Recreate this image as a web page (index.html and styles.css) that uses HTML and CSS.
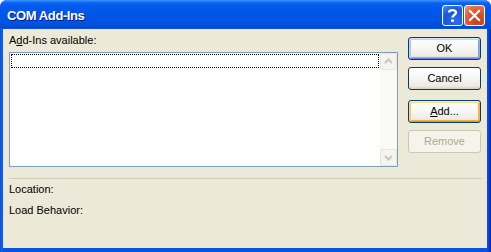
FILE: index.html
```html
<!DOCTYPE html>
<html>
<head>
<meta charset="utf-8">
<link rel="stylesheet" href="styles.css">
</head>
<body>
<div class="window">
  <div class="titlebar">
    <span class="title">COM Add-Ins</span>
    <div class="tbtns">
      <span class="tb help"><svg width="21" height="21" viewBox="0 0 21 21"><path d="M7 7.5 C7 4.5 14 4.2 14 7.6 C14 9.8 10.5 10 10.5 12.6" fill="none" stroke="#fff" stroke-width="2.4"/><rect x="9.2" y="14.4" width="2.6" height="2.6" fill="#fff"/></svg></span>
      <span class="tb close"><svg width="21" height="21" viewBox="0 0 21 21"><path d="M6 6 L15 15 M15 6 L6 15" stroke="#fff" stroke-width="2.2" stroke-linecap="square"/></svg></span>
    </div>
  </div>
  <div class="client">
    <div class="main">
      <div class="left">
        <div class="label">A<u>d</u>d-Ins available:</div>
        <div class="list">
          <div class="items"><div class="focus"></div></div>
          <div class="vscroll">
            <div class="sbtn"><svg width="15" height="15" viewBox="0 0 15 15"><path d="M4 9 L7.5 5.5 L11 9" fill="none" stroke="#C9C7BA" stroke-width="2"/></svg></div>
            <div class="track"></div>
            <div class="sbtn"><svg width="15" height="15" viewBox="0 0 15 15"><path d="M4 6 L7.5 9.5 L11 6" fill="none" stroke="#C9C7BA" stroke-width="2"/></svg></div>
          </div>
        </div>
      </div>
      <div class="buttons">
        <div class="btn default"><span>OK</span></div>
        <div class="btn"><span>Cancel</span></div>
        <div class="btn hot gap"><span><u>A</u>dd...</span></div>
        <div class="btn disabled"><span>Remove</span></div>
      </div>
    </div>
    <div class="sep"></div>
    <div class="info">
      <div class="row">Location:</div>
      <div class="row">Load Behavior:</div>
    </div>
  </div>
</div>
</body>
</html>
```

FILE: styles.css
```css
html, body {
  margin: 0;
  padding: 0;
  background: #ffffff;
}
.window {
  width: 491px;
  height: 252px;
  box-sizing: border-box;
  display: flex;
  flex-direction: column;
  background: linear-gradient(to right, #0831D9 0px, #166AEE 1px, #0855DD 3px, #0855DD 487px, #0831D9 490px, #001EA0 491px);
  border-radius: 7px 7px 0 0;
  overflow: hidden;
  font-family: "Liberation Sans", Arial, sans-serif;
  font-size: 11px;
  color: #000;
}
.titlebar {
  height: 29px;
  flex: none;
  display: flex;
  align-items: center;
  justify-content: space-between;
  padding: 0 6px 0 7px;
  background: linear-gradient(to bottom, #3D95FF 0px, #0A62F0 3px, #0058EE 8px, #0055E5 16px, #0054E3 22px, #004ED9 26px, #0049CF 28px, #1860E3 29px);
}
.title {
  color: #fff;
  font-weight: bold;
  font-size: 13px;
  letter-spacing: -0.4px;
  text-shadow: 1px 1px 0 #0A1883;
  padding-top: 1px;
}
.tbtns {
  display: flex;
  gap: 1px;
  padding-top: 2px;
}
.tb {
  width: 21px;
  height: 21px;
  box-sizing: border-box;
  border: 1px solid #fff;
  border-radius: 3px;
  display: flex;
  align-items: center;
  justify-content: center;
  overflow: hidden;
}
.tb svg { flex: none; }
.help {
  background: radial-gradient(circle at 70% 80%, #2E6CEC 0%, #1F5BE0 40%, #1C57DE 60%, #5C8FF0 100%);
}
.close {
  background: radial-gradient(circle at 70% 80%, #C7401C 0%, #D9532D 45%, #E5704E 75%, #F3A38A 100%);
}
.client {
  flex: 1;
  margin: 0 4px 4px 3px;
  background: #ECE9D8;
  display: flex;
  flex-direction: column;
  padding: 5px 6px 0 6px;
}
.main {
  display: flex;
  gap: 10px;
}
.left {
  width: 389px;
  display: flex;
  flex-direction: column;
}
.label {
  line-height: 13px;
  height: 13px;
}
.list {
  margin-top: 5px;
  height: 115px;
  box-sizing: border-box;
  border: 1px solid #7F9DB9;
  background: #fff;
  display: flex;
}
.items {
  flex: 1;
  padding: 1px;
}
.focus {
  height: 14px;
  box-sizing: border-box;
  border: 1px dotted #000;
}
.vscroll {
  width: 17px;
  display: flex;
  flex-direction: column;
  background: #FBFAF7;
}
.sbtn {
  width: 17px;
  height: 17px;
  box-sizing: border-box;
  border: 1px solid #E8E6DC;
  border-radius: 2px;
  background: #F5F4EE;
  display: flex;
  align-items: center;
  justify-content: center;
}
.track { flex: 1; }
.buttons {
  width: 73px;
  padding-top: 3px;
  display: flex;
  flex-direction: column;
  gap: 7px;
}
.btn {
  height: 23px;
  box-sizing: border-box;
  border: 1px solid #003C74;
  border-radius: 3px;
  background: linear-gradient(to bottom, #FFFFFF 0%, #F6F6F3 50%, #ECEBE6 85%, #D6D0C5 100%);
  display: flex;
  align-items: center;
  justify-content: center;
}
.btn span { line-height: 13px; }
.btn.default {
  box-shadow: inset 0 1px 0 #CEE7FF, inset 1px 0 0 #BCD4F6, inset -1px 0 0 #89ADE4, inset 0 -1px 0 #6982EE, inset 0 2px 0 #BCD4F6, inset 2px 0 0 #A9C6F4, inset -2px 0 0 #7DA2E6, inset 0 -2px 0 #89ADE4;
}
.btn.hot {
  box-shadow: inset 0 1px 0 #FFF0CF, inset 1px 0 0 #FDD889, inset -1px 0 0 #F8B330, inset 0 -1px 0 #E5971F, inset 0 2px 0 #FDD889, inset 2px 0 0 #FBC761, inset -2px 0 0 #F4B64A, inset 0 -2px 0 #F8B330;
}
.btn.gap { margin-top: 3px; }
.btn.disabled {
  border-color: #C9C7BA;
  background: #F5F4EA;
  color: #ACA899;
}
.sep {
  margin-top: 11px;
  height: 0;
  border-top: 1px solid #D0CDBE;
  margin-right: -1px;
}
.info {
  padding-top: 4px;
  display: flex;
  flex-direction: column;
  gap: 8px;
}
.row {
  line-height: 13px;
}
```
